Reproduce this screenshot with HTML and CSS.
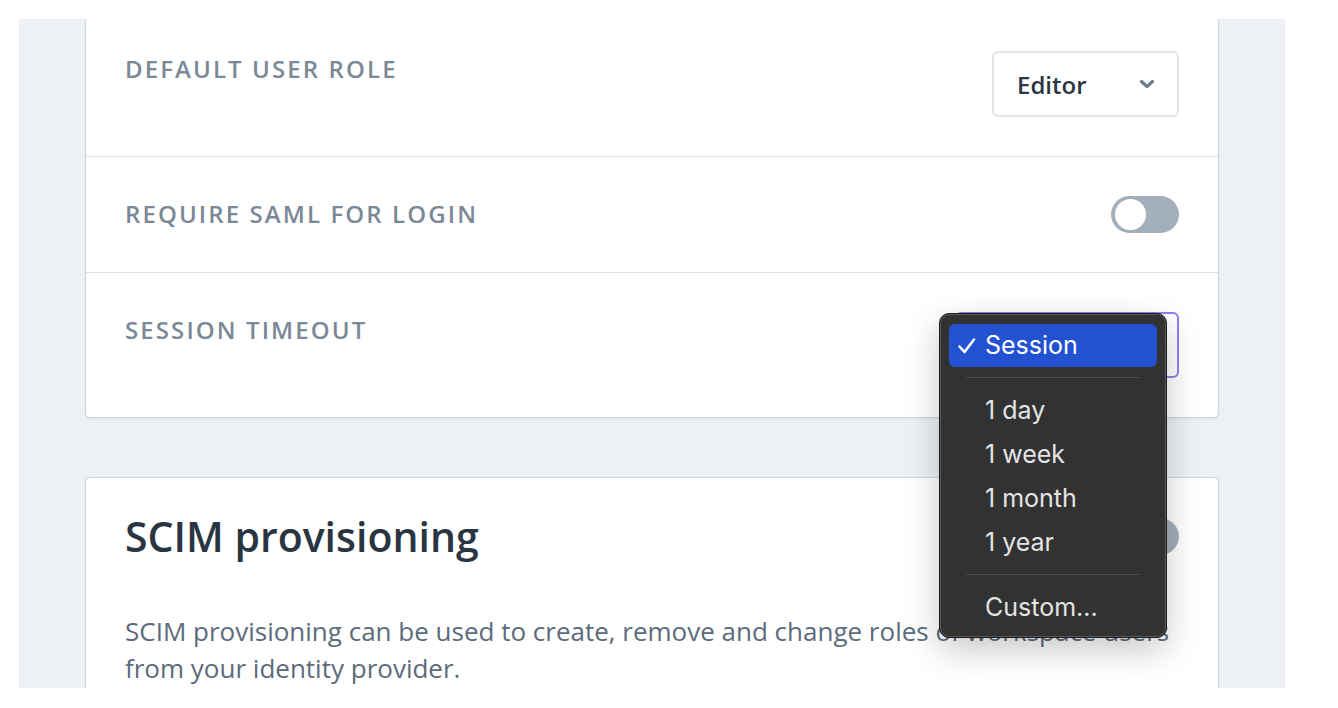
FILE: index.html
```html
<!DOCTYPE html>
<html lang="en">
<head>
    <meta charset="UTF-8">
    <meta name="viewport" content="width=device-width, initial-scale=1.0">
    <title>Workspace settings</title>
    <link rel="stylesheet" href="styles.css">
</head>
<body>
    <div class="frame">
        <section class="card card-first">
            <div class="row">
                <span class="label">DEFAULT USER ROLE</span>
                <div class="select">
                    <span>Editor</span>
                    <svg class="chevron" width="16" height="10" viewBox="0 0 16 10">
                        <path d="M2.5 2.5 L8 7.5 L13.5 2.5" fill="none" stroke="#6f7c8a" stroke-width="3.2" stroke-linecap="round" stroke-linejoin="round"/>
                    </svg>
                </div>
            </div>

            <div class="row">
                <span class="label">REQUIRE SAML FOR LOGIN</span>
                <span class="toggle"><span class="knob"></span></span>
            </div>

            <div class="row">
                <span class="label">SESSION TIMEOUT</span>
                <div class="select select-focus">
                    <!-- native popup menu, open (covers the select's value) -->
                    <div class="menu">
                        <div class="menu-item active">
                            <svg class="check" width="20" height="18" viewBox="0 0 20 18">
                                <path d="M2.5 9.5 L7.5 15 L17 2.5" fill="none" stroke="#fff" stroke-width="2.6" stroke-linecap="round" stroke-linejoin="round"/>
                            </svg>Session
                        </div>
                        <div class="menu-sep"></div>
                        <div class="menu-item">1 day</div>
                        <div class="menu-item">1 week</div>
                        <div class="menu-item">1 month</div>
                        <div class="menu-item">1 year</div>
                        <div class="menu-sep"></div>
                        <div class="menu-item">Custom...</div>
                    </div>
                </div>
            </div>
        </section>

        <section class="card card-scim">
            <div class="card-head">
                <h2>SCIM provisioning</h2>
                <span class="toggle"><span class="knob"></span></span>
            </div>
            <p class="desc">SCIM provisioning can be used to create, remove and change roles of workspace users<br>from your identity provider.</p>
        </section>
    </div>
</body>
</html>
```

FILE: styles.css
```css
* {
    box-sizing: border-box;
}

body {
    margin: 0;
    background-color: #fff;
    font-family: "Open Sans", "Liberation Sans", sans-serif;
}

.frame {
    width: 1266px;
    height: 669px;
    margin: 19px 0 0 19px;
    padding: 0 0 0 66px;
    background-color: #edf0f4;
    overflow: hidden;
}

.card {
    width: 1134px;
    background-color: #fff;
    border: 1px solid #cdd5de;
    border-radius: 5px;
    box-shadow: 0 1px 2px rgba(40, 60, 90, 0.08);
}

.card-first {
    margin-top: -8px;
}

.card-scim {
    margin-top: 59px;
    padding: 40px 39px 0 39px;
    height: 400px;
}

.row {
    display: flex;
    justify-content: space-between;
    align-items: flex-start;
    padding: 39px 39px;
    border-bottom: 1px solid #dfe4ea;
}

.row:last-child {
    border-bottom: none;
}

.label {
    margin-top: 3px;
    font-size: 24px;
    line-height: 30px;
    font-weight: 600;
    letter-spacing: 2.1px;
    color: #7b8896;
}

.select {
    position: relative;
    width: 187px;
    height: 66px;
    padding: 0 22px 0 23px;
    display: flex;
    align-items: center;
    justify-content: space-between;
    border: 2px solid #e1e6ec;
    border-radius: 6px;
    font-size: 24px;
    font-weight: 600;
    color: #2b3643;
}

.select-focus {
    width: 224px;
    border: 2px solid #8d7ff2;
}

.toggle {
    position: relative;
    display: block;
    width: 68px;
    height: 37px;
    border-radius: 19px;
    background-color: #a3afbb;
}

.knob {
    position: absolute;
    left: 4px;
    top: 3px;
    width: 31px;
    height: 31px;
    border-radius: 50%;
    background-color: #fff;
}

.menu {
    position: absolute;
    left: -18px;
    top: -1px;
    z-index: 5;
    width: 228px;
    padding: 10px 9px 8px 9px;
    background-color: #323232;
    border: 1px solid #1c1c1c;
    border-radius: 10px;
    box-shadow: inset 0 0 0 1px #595959, 0 12px 34px rgba(0, 0, 0, 0.22);
    font-family: Inter, "Noto Sans", sans-serif;
    font-weight: 400;
    font-size: 25px;
    color: #e4e4e4;
}

.menu-item {
    height: 44px;
    line-height: 44px;
    padding-left: 36px;
    border-radius: 6px;
}

.menu-item.active {
    display: flex;
    align-items: center;
    height: 43px;
    line-height: 43px;
    padding-left: 8px;
    background-color: #2251d1;
    color: #fff;
}

.check {
    margin-right: 8px;
}

.menu-sep {
    height: 1px;
    margin: 10px 17px 10px 17px;
    background-color: #4b4b4b;
}

.card-head {
    display: flex;
    justify-content: space-between;
    align-items: center;
}

h2 {
    margin: 0;
    font-size: 41px;
    line-height: 37px;
    font-weight: 600;
    color: #2a3542;
}

.desc {
    margin: 58px 0 0 0;
    font-size: 26px;
    line-height: 37px;
    white-space: nowrap;
    color: #5b6b7c;
}
```
